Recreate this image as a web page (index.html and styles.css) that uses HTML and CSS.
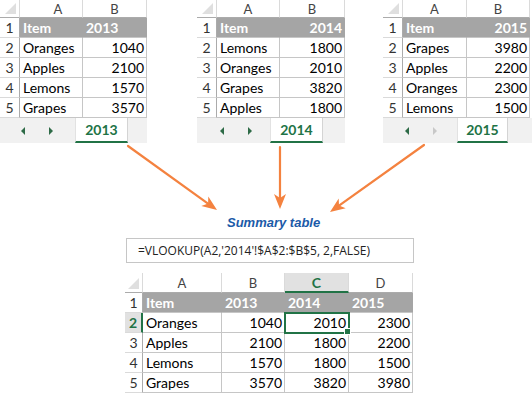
FILE: index.html
```html
<!DOCTYPE html>
<html>
<head>
<meta charset="utf-8">
<link rel="stylesheet" href="styles.css">
</head>
<body>
<div class="top">
  <div class="sheet s1">
    <div class="grid">
      <div class="corner"></div><div class="ch cha">A</div><div class="ch">B</div>
      <div class="rh">1</div><div class="c hd">Item</div><div class="c hd">2013</div>
      <div class="rh">2</div><div class="c">Oranges</div><div class="c n">1040</div>
      <div class="rh">3</div><div class="c">Apples</div><div class="c n">2100</div>
      <div class="rh">4</div><div class="c">Lemons</div><div class="c n">1570</div>
      <div class="rh">5</div><div class="c">Grapes</div><div class="c n">3570</div>
    </div>
    <div class="tabs">
      <div class="navs"><span class="nav prev"></span><span class="nav next"></span></div>
      <div class="tab">2013</div>
    </div>
  </div>
  <div class="sheet s2">
    <div class="grid">
      <div class="corner"></div><div class="ch">A</div><div class="ch">B</div>
      <div class="rh">1</div><div class="c hd">Item</div><div class="c hd n">2014</div>
      <div class="rh">2</div><div class="c">Lemons</div><div class="c n">1800</div>
      <div class="rh">3</div><div class="c">Oranges</div><div class="c n">2010</div>
      <div class="rh">4</div><div class="c">Grapes</div><div class="c n">3820</div>
      <div class="rh">5</div><div class="c">Apples</div><div class="c n">1800</div>
    </div>
    <div class="tabs">
      <div class="navs"><span class="nav prev"></span><span class="nav next"></span></div>
      <div class="tab">2014</div>
    </div>
  </div>
  <div class="sheet s3">
    <div class="grid">
      <div class="corner"></div><div class="ch">A</div><div class="ch">B</div>
      <div class="rh">1</div><div class="c hd">Item</div><div class="c hd n">2015</div>
      <div class="rh">2</div><div class="c">Grapes</div><div class="c n">3980</div>
      <div class="rh">3</div><div class="c">Apples</div><div class="c n">2200</div>
      <div class="rh">4</div><div class="c">Oranges</div><div class="c n">2300</div>
      <div class="rh">5</div><div class="c">Lemons</div><div class="c n">1500</div>
    </div>
    <div class="tabs">
      <div class="navs"><span class="nav prev"></span><span class="nav next off"></span></div>
      <div class="tab">2015</div>
    </div>
  </div>
</div>

<svg class="arrows" width="532" height="70" viewBox="0 0 532 70">
  <g stroke="#f4823f" stroke-width="2.2" fill="none" stroke-linecap="round">
    <line x1="128" y1="3" x2="208" y2="60.6"/>
    <line x1="280" y1="4" x2="280" y2="55"/>
    <line x1="424" y1="2" x2="339" y2="62.6"/>
  </g>
  <g fill="#f4823f">
    <polygon points="217,67 201.3,63.1 208.1,60.6 208.3,53.4"/>
    <polygon points="280,66 274,51 280,55 286,51"/>
    <polygon points="330,69 338.7,55.4 339,62.6 345.7,65.2"/>
  </g>
</svg>

<div class="caption">Summary table</div>

<div class="formula">=VLOOKUP(A2,'2014'!$A$2:$B$5, 2,FALSE)</div>

<div class="summary">
  <div class="corner"></div><div class="ch">A</div><div class="ch">B</div><div class="ch sel">C</div><div class="ch">D</div>
  <div class="rh">1</div><div class="c hd">Item</div><div class="c hd">2013</div><div class="c hd">2014</div><div class="c hd">2015</div>
  <div class="rh sel">2</div><div class="c">Oranges</div><div class="c n">1040</div><div class="c n active">2010</div><div class="c n">2300</div>
  <div class="rh">3</div><div class="c">Apples</div><div class="c n">2100</div><div class="c n">1800</div><div class="c n">2200</div>
  <div class="rh">4</div><div class="c">Lemons</div><div class="c n">1570</div><div class="c n">1800</div><div class="c n">1500</div>
  <div class="rh">5</div><div class="c">Grapes</div><div class="c n">3570</div><div class="c n">3820</div><div class="c n">3980</div>
</div>
</body>
</html>
```

FILE: styles.css
```css
* { box-sizing: border-box; }
html, body { margin: 0; padding: 0; background: #fff; }
body {
  width: 532px;
  height: 394px;
  overflow: hidden;
  font-family: Lato, "Liberation Sans", sans-serif;
  font-size: 14px;
  color: #000;
}

.top { display: flex; height: 143px; }
.s1 { width: 147px; }
.s2 { width: 148px; margin-left: 50px; }
.s3 { width: 149px; margin-left: 38px; }

.grid {
  display: grid;
  grid-template-rows: 18px repeat(5, 20px);
}
.s1 .grid { grid-template-columns: 20px 63px 64px; }
.s2 .grid { grid-template-columns: 20px 63px 65px; }
.s3 .grid { grid-template-columns: 20px 64px 63px; }

.corner {
  position: relative;
  background: #fff;
  border-right: 1px solid #dadada;
  border-bottom: 1px solid #ababab;
}
.corner::after {
  content: "";
  position: absolute;
  right: 3px;
  bottom: 3px;
  width: 0;
  height: 0;
  border-left: 11px solid transparent;
  border-bottom: 11px solid #dfdfdf;
}
.ch {
  display: flex;
  align-items: center;
  justify-content: center;
  color: #444;
  font-size: 13px;
  border-right: 1px solid #dadada;
  border-bottom: 1px solid #ababab;
}
.cha { padding-left: 14px; }
.rh {
  display: flex;
  align-items: center;
  justify-content: center;
  color: #333;
  font-size: 14px;
  border-right: 1px solid #ababab;
  border-bottom: 1px solid #dadada;
}
.c {
  display: flex;
  align-items: center;
  padding: 0 3px;
  white-space: nowrap;
  border-right: 1px solid #c6c6c6;
  border-bottom: 1px solid #c6c6c6;
}
.c.n { justify-content: flex-end; padding-right: 2px; }
.c.hd {
  background: #a5a5a5;
  color: #fff;
  font-weight: bold;
  border-right-color: #a5a5a5;
  border-bottom-color: #c6c6c6;
}

.tabs {
  display: flex;
  height: 25px;
  background: #f1f1f1;
}
.navs {
  display: flex;
  align-items: center;
  gap: 24px;
  padding-left: 21px;
  width: 75px;
}
.s2 .navs { padding-left: 23px; width: 73px; }
.s3 .navs { padding-left: 22px; width: 74px; }
.nav {
  width: 0;
  height: 0;
  border-top: 4px solid transparent;
  border-bottom: 4px solid transparent;
}
.nav.prev { border-right: 4px solid #2e6b47; }
.nav.next { border-left: 4px solid #2e6b47; }
.nav.next.off { border-left-color: #c8c8c8; }
.tab {
  width: 53px;
  display: flex;
  align-items: center;
  justify-content: center;
  background: #fff;
  color: #217346;
  font-weight: bold;
  font-size: 14px;
  border-bottom: 2px solid #217346;
  border-left: 1px solid #e2e2e2;
  border-right: 1px solid #d4d4d4;
}
.s3 .tab { width: 51px; }

.arrows { display: block; }

.caption {
  margin-left: 227px;
  height: 20px;
  line-height: 20px;
  font-family: "Liberation Sans", sans-serif;
  font-size: 13px;
  font-weight: bold;
  font-style: italic;
  color: #1b5aa8;
}

.formula {
  margin: 5px 0 0 126px;
  width: 288px;
  height: 25px;
  border: 1px solid #c6c6c6;
  padding-left: 11px;
  line-height: 23px;
  font-family: "Open Sans", sans-serif;
  font-size: 12px;
  color: #222;
}

.summary {
  display: grid;
  margin: 10px 0 0 125px;
  grid-template-columns: 18px 79px 63px 64px 64px;
  grid-template-rows: 20px repeat(5, 20px);
  width: 288px;
}
.summary .ch.sel {
  background: #e1e1e1;
  color: #217346;
  font-weight: bold;
  font-size: 14px;
  border-bottom: 2px solid #217346;
}
.summary .rh.sel {
  background: #e1e1e1;
  color: #217346;
  font-weight: bold;
  border-right: 2px solid #217346;
}
.c.active {
  position: relative;
  outline: 2px solid #217346;
  outline-offset: -1px;
}
.c.active::after {
  content: "";
  position: absolute;
  right: -3px;
  bottom: -3px;
  width: 5px;
  height: 5px;
  background: #217346;
  border: 1px solid #fff;
}
```
